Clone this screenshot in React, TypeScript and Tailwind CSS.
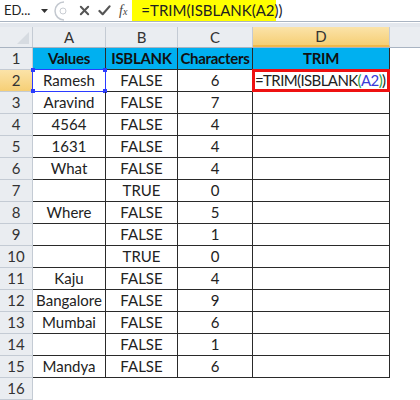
import React from "react";

const cols = [
  { key: "A", w: "w-[73px]" },
  { key: "B", w: "w-[72px]" },
  { key: "C", w: "w-[75px]" },
  { key: "D", w: "w-[137px]" },
];

const rows: [string, string, string][] = [
  ["Ramesh", "FALSE", "6"],
  ["Aravind", "FALSE", "7"],
  ["4564", "FALSE", "4"],
  ["1631", "FALSE", "4"],
  ["What", "FALSE", "4"],
  ["", "TRUE", "0"],
  ["Where", "FALSE", "5"],
  ["", "FALSE", "1"],
  ["", "TRUE", "0"],
  ["Kaju", "FALSE", "4"],
  ["Bangalore", "FALSE", "9"],
  ["Mumbai", "FALSE", "6"],
  ["", "FALSE", "1"],
  ["Mandya", "FALSE", "6"],
];

const font = { fontFamily: "Lato, 'Open Sans', sans-serif" };

function FormulaBar() {
  return (
    <div className="flex h-[22px] items-center bg-white border-b border-[#a9b4c2]">
      <div className="flex w-[50px] items-center pl-[4px] text-[13px] text-[#222]">
        <span className="w-[28px]">ED...</span>
        <svg width="7" height="4" viewBox="0 0 7 4" className="ml-[9px]">
          <path d="M0 0 H7 L3.5 4 Z" fill="#333" />
        </svg>
      </div>
      <svg width="16" height="20" viewBox="0 0 16 20" className="ml-[3px]">
        <path d="M11 1 A9 9 0 0 0 11 19" fill="none" stroke="#c3c8cf" strokeWidth="1.5" />
        <circle cx="10" cy="10" r="3" fill="none" stroke="#c8ccd2" strokeWidth="1" />
      </svg>
      <svg width="11" height="11" viewBox="0 0 12 12" className="ml-[10px]">
        <path d="M2 2 L10 10 M10 2 L2 10" stroke="#555" strokeWidth="2.2" strokeLinecap="round" />
      </svg>
      <svg width="13" height="11" viewBox="0 0 14 12" className="ml-[8px]">
        <path d="M1.5 6.5 L5 10 L12.5 1.5" fill="none" stroke="#555" strokeWidth="2.4" strokeLinecap="round" strokeLinejoin="round" />
      </svg>
      <span
        className="ml-[8px] text-[14px] italic text-[#444]"
        style={{ fontFamily: "'Liberation Serif', serif" }}
      >
        f<span className="text-[10px]">x</span>
      </span>
      <div className="ml-[5px] h-[21px] w-[144px] self-start bg-[#ffff00] pl-[9px] text-[15px] leading-[21px] text-[#222]">
        =TRIM(ISBLANK(A2))
      </div>
    </div>
  );
}

export default function App() {
  return (
    <div className="w-[420px] h-[400px] overflow-hidden bg-white" style={font}>
      <FormulaBar />
      <div className="h-[1px] bg-white" />
      <div className="h-[4px] bg-[#e3e7ed]" />

      {/* column headers */}
      <div className="flex h-[21px] bg-[#eaedf1] border-b border-[#a9b4c2] text-[15px] text-[#333]">
        <div className="relative w-[33px] border-r border-[#c4cbd4]">
          <svg width="12" height="12" viewBox="0 0 12 12" className="absolute right-[3px] bottom-[3px]">
            <path d="M12 0 V12 H0 Z" fill="#d6dbe1" />
          </svg>
        </div>
        {cols.map((c) => (
          <div
            key={c.key}
            className={`${c.w} flex items-center justify-center border-r border-[#c4cbd4] ${
              c.key === "D" ? "bg-gradient-to-b from-[#fbe3a8] to-[#f6cf75] border-b-2 border-b-[#f0b84a]" : ""
            }`}
          >
            {c.key}
          </div>
        ))}
        <div className="flex-1" />
      </div>

      {/* row 1 headers */}
      <div className="flex h-[22px] text-[15px]">
        <div className="w-[33px] flex items-center justify-center bg-[#eaedf1] border-r border-b border-[#c4cbd4] text-[#333]">
          1
        </div>
        {["Values", "ISBLANK", "Characters", "TRIM"].map((t, i) => (
          <div
            key={t}
            className={`${cols[i].w} flex items-center justify-center bg-[#00b0f0] border-r border-b border-[#2a2a2a] font-bold text-[#111] tracking-[-0.3px]`}
          >
            {t}
          </div>
        ))}
        <div className="flex-1" />
      </div>

      {rows.map((r, idx) => {
        const n = idx + 2;
        const sel = n === 2;
        return (
          <div key={n} className="flex h-[22px] text-[15px] text-[#222]">
            <div
              className={`w-[33px] flex items-center justify-center border-r border-b border-[#c4cbd4] text-[#333] ${
                sel ? "bg-gradient-to-b from-[#fbe3a8] to-[#f6cf75] border-r-[#f0b84a]" : "bg-[#eaedf1]"
              }`}
            >
              {n}
            </div>
            <div className={`${cols[0].w} relative flex items-center justify-center border-r border-b border-[#2a2a2a]`}>
              {r[0]}
              {sel && (
                <div className="absolute inset-[-1px] border border-[#2b3bff]">
                  <div className="absolute left-[-2px] top-[-2px] h-[4px] w-[4px] bg-[#2b3bff]" />
                  <div className="absolute right-[-2px] top-[-2px] h-[4px] w-[4px] bg-[#2b3bff]" />
                  <div className="absolute left-[-2px] bottom-[-2px] h-[4px] w-[4px] bg-[#2b3bff]" />
                  <div className="absolute right-[-2px] bottom-[-2px] h-[4px] w-[4px] bg-[#2b3bff]" />
                </div>
              )}
            </div>
            <div className={`${cols[1].w} flex items-center justify-center border-r border-b border-[#2a2a2a]`}>{r[1]}</div>
            <div className={`${cols[2].w} flex items-center justify-center border-r border-b border-[#2a2a2a]`}>{r[2]}</div>
            <div className={`${cols[3].w} relative flex items-center border-r border-b border-[#2a2a2a]`}>
              {sel && (
                <div className="absolute inset-[-1px] flex items-center border-[3px] border-[#ee1111] pl-[0px] tracking-[-0.6px] whitespace-nowrap">
                  =TRIM(ISBLANK<span className="text-[#2ea043]">(</span>
                  <span className="text-[#3b3bd8]">A2</span>
                  <span className="text-[#2ea043]">)</span>)
                </div>
              )}
            </div>
            <div className="flex-1" />
          </div>
        );
      })}

      <div className="flex h-[22px] text-[15px]">
        <div className="w-[33px] flex items-center justify-center bg-[#eaedf1] border-r border-b border-[#c4cbd4] text-[#333]">
          16
        </div>
        <div className="flex-1" />
      </div>
    </div>
  );
}
